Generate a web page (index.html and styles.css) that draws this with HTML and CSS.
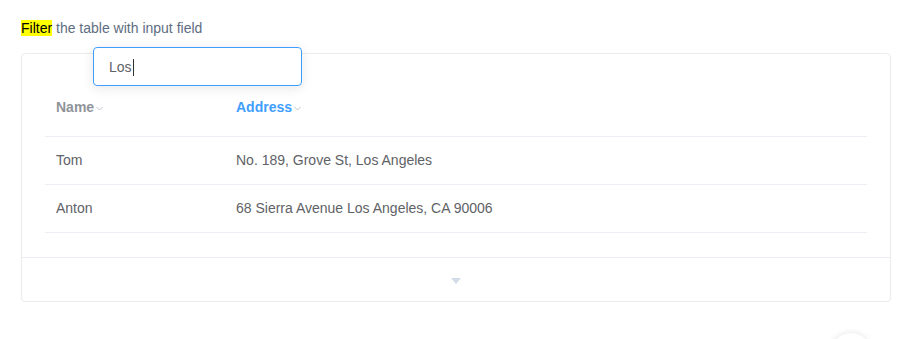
FILE: index.html
```html
<!DOCTYPE html>
<html>
<head>
<meta charset="utf-8">
<link rel="stylesheet" href="styles.css">
</head>
<body>
<div class="page">
  <p class="intro"><mark class="hl">Filter</mark> the table with input field</p>
  <div class="card">
    <div class="search">
      <input class="search-input" type="text" value="Los">
      <span class="caret"></span>
    </div>
    <div class="table">
      <div class="row head">
        <div class="cell c1">Name<svg class="sort" width="7" height="5" viewBox="0 0 7 5"><path d="M0.5 1 L3.5 4 L6.5 1" fill="none" stroke="#c0c4cc" stroke-width="1"/></svg></div>
        <div class="cell c2 active">Address<svg class="sort" width="7" height="5" viewBox="0 0 7 5"><path d="M0.5 1 L3.5 4 L6.5 1" fill="none" stroke="#c0c4cc" stroke-width="1"/></svg></div>
      </div>
      <div class="row">
        <div class="cell c1">Tom</div>
        <div class="cell c2">No. 189, Grove St, Los Angeles</div>
      </div>
      <div class="row">
        <div class="cell c1">Anton</div>
        <div class="cell c2">68 Sierra Avenue Los Angeles, CA 90006</div>
      </div>
    </div>
    <div class="footer"><span class="tri"></span></div>
  </div>
</div>
<div class="backtop"></div>
</body>
</html>
```
FILE: styles.css
```css
html, body {
  margin: 0;
  padding: 0;
  background: #fff;
  font-family: "Liberation Sans", Arial, sans-serif;
  overflow: hidden;
  height: 339px;
}
body {
  position: relative;
}
.page {
  padding: 18px 17px 0 21px;
}
.intro {
  margin: 0;
  font-size: 14px;
  line-height: 20px;
  color: #5e6d82;
}
.hl {
  background: #ffff00;
  color: #000;
}
.card {
  position: relative;
  margin-top: 15px;
  border: 1px solid #ebebeb;
  border-radius: 4px;
  width: 870px;
  box-sizing: border-box;
}
.search {
  position: absolute;
  left: 71px;
  top: -7px;
  width: 209px;
  height: 39px;
  box-sizing: border-box;
  border: 1px solid #409eff;
  border-radius: 4px;
  background: #fff;
  box-shadow: 0 2px 12px rgba(0,0,0,0.1);
}
.search-input {
  border: none;
  outline: none;
  background: transparent;
  width: 100%;
  height: 100%;
  padding: 0 0 0 15px;
  box-sizing: border-box;
  font-family: "Liberation Sans", Arial, sans-serif;
  font-size: 14px;
  color: #606266;
}
.caret {
  position: absolute;
  left: 39px;
  top: 11px;
  width: 1px;
  height: 17px;
  background: #303133;
}
.table {
  margin: 0 23px 0 23px;
  padding-top: 34px;
}
.row {
  display: flex;
  height: 48px;
  box-sizing: border-box;
  border-bottom: 1px solid #ebeef5;
  align-items: center;
  font-size: 14px;
  color: #606266;
}
.row .cell {
  padding-left: 11px;
  box-sizing: border-box;
  line-height: 20px;
  padding-bottom: 2px;
}
.row.head {
  height: 49px;
  align-items: flex-start;
  padding-top: 9px;
  font-weight: bold;
  color: #909399;
}
.c1 { width: 180px; }
.c2 { flex: 1; }
.active { color: #409eff; }
.sort {
  display: inline-block;
  margin-left: 2px;
  vertical-align: 1px;
}
.footer {
  margin-top: 24px;
  border-top: 1px solid #ebeef5;
  height: 43px;
  display: flex;
  align-items: center;
  justify-content: center;
}
.tri {
  width: 0;
  height: 0;
  border-left: 5px solid transparent;
  border-right: 5px solid transparent;
  border-top: 6px solid #d3dce6;
  margin-top: 2px;
}
.backtop {
  position: absolute;
  left: 831px;
  top: 333px;
  width: 40px;
  height: 40px;
  border-radius: 50%;
  background: #fff;
  box-shadow: 0 0 6px rgba(0,0,0,0.12);
}
```
